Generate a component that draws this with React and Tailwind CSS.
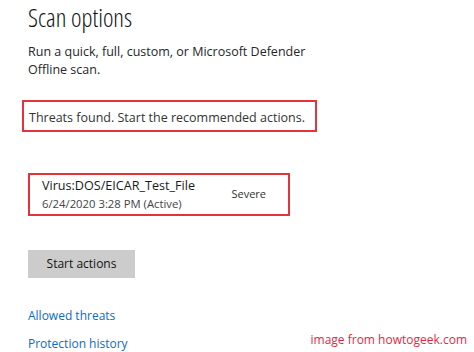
export default function App() {
  return (
    <div
      className="relative h-[352px] w-[474px] overflow-hidden bg-white pl-[28px] text-[#1a1a1a]"
      style={{ fontFamily: '"Open Sans", "Noto Sans", sans-serif' }}
    >
      <h1 className="text-[25px] leading-[34px] font-[350] font-stretch-[80%] whitespace-nowrap text-[#111]">
        Scan options
      </h1>

      <p className="mt-[9px] text-[12.5px] leading-[18px] text-[#262626]">
        Run a quick, full, custom, or Microsoft Defender
        <br />
        Offline scan.
      </p>

      {/* Threats banner */}
      <div className="mt-[21px] -ml-[6px] w-[295px] border-2 border-[#e5323b] px-[5px] py-[2px]">
        <span className="text-[12.5px] leading-[20px] whitespace-nowrap text-[#333]">
          Threats found. Start the recommended actions.
        </span>
      </div>

      {/* Threat item */}
      <div className="mt-[41px] flex w-[262px] items-center border-2 border-[#e5323b] py-[2px] pl-[12px] pr-[22px]">
        <div className="flex-1">
          <div className="text-[12.6px] leading-[18px] whitespace-nowrap text-[#1a1a1a]">Virus:DOS/EICAR_Test_File</div>
          <div className="text-[11.3px] leading-[17px] whitespace-nowrap text-[#444]">6/24/2020 3:28 PM (Active)</div>
        </div>
        <span className="text-[11px] text-[#333]">Severe</span>
      </div>

      <button className="mt-[34px] flex h-[28px] w-[107px] items-center justify-center bg-[#cccccc] text-[12px] text-[#111]">
        Start actions
      </button>

      <div className="mt-[28px] flex flex-col gap-[8px] text-[12px] leading-[20px] text-[#0b6cc4]">
        <a>Allowed threats</a>
        <a>Protection history</a>
      </div>

      <span className="absolute right-[7px] bottom-[3px] text-[12px] leading-[18px] text-[#e2293f]">
        image from howtogeek.com
      </span>
    </div>
  );
}
